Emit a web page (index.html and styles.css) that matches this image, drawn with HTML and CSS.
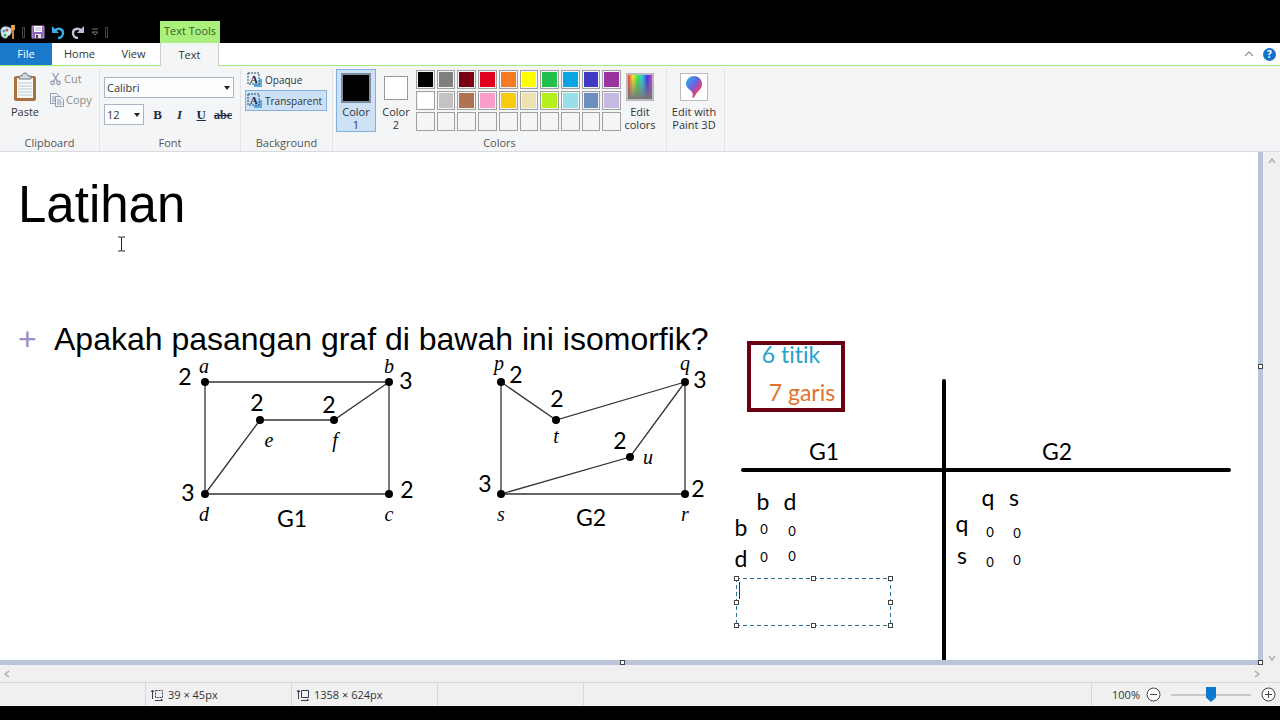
FILE: index.html
```html
<!DOCTYPE html>
<html lang="id">
<head>
    <meta charset="UTF-8">
    <meta name="viewport" content="width=device-width, initial-scale=1.0">
    <title>Paint</title>
    <link rel="stylesheet" href="styles.css">
</head>
<body>
    <header class="titlebar">
        <div class="quick">
            <svg width="16" height="16" viewBox="0 0 16 16">
                <path d="M1 8C0 4 4 2 7 3c4 0 5 3 4 6s-2 2-3 3 0 2-3 2-4-3-4-6z" fill="#d9eaf2" stroke="#8fb1c4"/>
                <circle cx="4" cy="7" r="1.500" fill="#3a9bd8"/><circle cx="7" cy="6" r="1.500" fill="#d84a3a"/><circle cx="5" cy="11" r="1.500" fill="#4cad4c"/>
                <path d="M13 6v9" stroke="#c98436" stroke-width="2"/><path d="M13 1v5" stroke="#e9a04c" stroke-width="4"/>
            </svg>
            <span class="bar"></span>
            <button class="tool" aria-label="Save">
                <svg width="14" height="14" viewBox="0 0 14 14">
                    <path d="M1 1h12v12H1z" fill="#8b62b4" stroke="#b598d2"/><path d="M3 1h8v6H3z" fill="#fff"/><path d="M4 3h6M4 5h6" stroke="#b9aac9"/><path d="M4 9h6v4H4z" fill="#ddd"/><path d="M5 10h2v3H5z" fill="#4d3569"/>
                </svg>
            </button>
            <button class="tool" aria-label="Undo">
                <svg width="14" height="14" viewBox="0 0 14 14"><path d="M1 1v7h7z" fill="#3fa9e0"/><path d="M3 6c4-4 9-2 9 2 0 3-2 5-5 5" fill="none" stroke="#3fa9e0" stroke-width="2.4"/></svg>
            </button>
            <button class="tool" aria-label="Redo">
                <svg width="14" height="14" viewBox="0 0 14 14"><path d="M13 1v7H6z" fill="#b8c1d3"/><path d="M11 6C7 2 2 4 2 8c0 3 2 5 5 5" fill="none" stroke="#b8c1d3" stroke-width="2.4"/></svg>
            </button>
            <button class="tool narrow" aria-label="Customize">
                <svg width="8" height="8" viewBox="0 0 8 8"><path d="M1 1h6M1 4h6L4 7z" fill="none" stroke="#777"/></svg>
            </button>
            <span class="bar"></span>
        </div>
        <div class="context">Text Tools</div>
    </header>

    <nav class="tabs">
        <button class="tab file">File</button>
        <button class="tab home">Home</button>
        <button class="tab view">View</button>
        <button class="tab active">Text</button>
        <div class="tabs-end">
            <button class="tool" aria-label="Collapse">
                <svg width="10" height="6" viewBox="0 0 10 6"><path d="M1 5l4-4 4 4" fill="none" stroke="#999" stroke-width="1.4"/></svg>
            </button>
            <button class="help">?</button>
        </div>
    </nav>

    <div class="ribbon">
        <section class="group clipboard">
            <div class="group-body">
                <button class="paste">
                    <svg width="26" height="30" viewBox="0 0 26 30">
                        <rect x="2" y="4" width="22" height="25" rx="2" fill="#a9723a"/><path d="M5 6h16v20H5z" fill="#f8fafc"/>
                        <path d="M6 11h14M6 14h14M6 17h14M6 20h14M6 23h14" stroke="#b9c6d4"/>
                        <path d="M7 7V4h3c0-4 6-4 6 0h3v3z" fill="#d5dade" stroke="#6d7680"/>
                    </svg>
                    Paste
                </button>
                <div class="stack muted">
                    <button class="mini">
                        <svg width="12" height="14" viewBox="0 0 14 14" fill="none" stroke="#8d9bb0" stroke-width="1.4"><path d="M3 0l6 10M10 0L4 10"/><circle cx="3" cy="11.500" r="2"/><circle cx="10" cy="11.500" r="2"/></svg>
                        Cut
                    </button>
                    <button class="mini">
                        <svg width="14" height="14" viewBox="0 0 14 14" fill="#f2f5fa" stroke="#8d9bb0"><path d="M.5.5h6l2 2v8h-8z"/><path d="M2 4h4M2 6h4M2 8h4"/><path d="M5.500 3.500h5l3 3v7h-8z"/><path d="M7 7h4M7 9h5M7 11h5"/></svg>
                        Copy
                    </button>
                </div>
            </div>
            <div class="group-name">Clipboard</div>
        </section>

        <section class="group font">
            <div class="group-body">
                <select class="family" aria-label="Font family"><option>Calibri</option></select>
                <div class="font-row">
                    <select class="size" aria-label="Font size"><option>12</option></select>
                    <button class="style"><b>B</b></button>
                    <button class="style"><b><i>I</i></b></button>
                    <button class="style"><b><u>U</u></b></button>
                    <button class="style small"><s>abc</s></button>
                </div>
            </div>
            <div class="group-name">Font</div>
        </section>

        <section class="group background">
            <div class="group-body">
                <button class="mode">
                    <svg width="16" height="16" viewBox="0 0 16 16"><path d="M7 7h8v8H7z" fill="#5aa9e6"/><path d="M1 1h11v11H1z" fill="#eaf3fb" stroke="#24476b" stroke-dasharray="2 1"/><text x="3" y="11" class="glyph">A</text></svg>
                    Opaque
                </button>
                <button class="mode on">
                    <svg width="16" height="16" viewBox="0 0 16 16"><path d="M7 7h8v8H7z" fill="#5aa9e6"/><path d="M1 1h11v11H1z" fill="#c5def5" stroke="#24476b" stroke-dasharray="2 1"/><text x="3" y="11" class="glyph">A</text></svg>
                    Transparent
                </button>
            </div>
            <div class="group-name">Background</div>
        </section>

        <section class="group colors">
            <div class="group-body">
                <button class="slot on"><span class="chip big c-black"></span>Color<br>1</button>
                <button class="slot"><span class="chip c-white"></span>Color<br>2</button>
                <div class="palette">
                    <button class="swatch c-black" aria-label="Black"></button>
                    <button class="swatch c-gray" aria-label="Gray"></button>
                    <button class="swatch c-darkred" aria-label="Dark red"></button>
                    <button class="swatch c-red" aria-label="Red"></button>
                    <button class="swatch c-orange" aria-label="Orange"></button>
                    <button class="swatch c-yellow" aria-label="Yellow"></button>
                    <button class="swatch c-green" aria-label="Green"></button>
                    <button class="swatch c-turquoise" aria-label="Turquoise"></button>
                    <button class="swatch c-indigo" aria-label="Indigo"></button>
                    <button class="swatch c-purple" aria-label="Purple"></button>
                    <button class="swatch c-white" aria-label="White"></button>
                    <button class="swatch c-silver" aria-label="Light gray"></button>
                    <button class="swatch c-brown" aria-label="Brown"></button>
                    <button class="swatch c-rose" aria-label="Rose"></button>
                    <button class="swatch c-gold" aria-label="Gold"></button>
                    <button class="swatch c-cream" aria-label="Light yellow"></button>
                    <button class="swatch c-lime" aria-label="Lime"></button>
                    <button class="swatch c-sky" aria-label="Light turquoise"></button>
                    <button class="swatch c-steel" aria-label="Blue gray"></button>
                    <button class="swatch c-lavender" aria-label="Lavender"></button>
                    <button class="swatch" aria-label="Empty"></button>
                    <button class="swatch" aria-label="Empty"></button>
                    <button class="swatch" aria-label="Empty"></button>
                    <button class="swatch" aria-label="Empty"></button>
                    <button class="swatch" aria-label="Empty"></button>
                    <button class="swatch" aria-label="Empty"></button>
                    <button class="swatch" aria-label="Empty"></button>
                    <button class="swatch" aria-label="Empty"></button>
                    <button class="swatch" aria-label="Empty"></button>
                    <button class="swatch" aria-label="Empty"></button>
                </div>
                <button class="slot edit"><span class="chip rainbow"></span>Edit<br>colors</button>
            </div>
            <div class="group-name">Colors</div>
        </section>

        <section class="group paint3d">
            <div class="group-body">
                <button class="slot edit">
                    <span class="chip drop">
                        <svg width="20" height="24" viewBox="0 0 20 24">
                            <defs><linearGradient id="drop" x1="0" y1="0" x2="1" y2="1"><stop offset="0" stop-color="#22c3ee"/><stop offset=".45" stop-color="#6a63dc"/><stop offset=".7" stop-color="#e0407e"/><stop offset="1" stop-color="#f5a623"/></linearGradient></defs>
                            <path d="M10 1c5 0 8 4 8 8 0 5-4 7-6 10-1 2-2 4-4 4 1-2 1-4 0-6-2-3-6-4-6-8s3-8 8-8z" fill="url(#drop)"/>
                        </svg>
                    </span>
                    Edit with<br>Paint 3D
                </button>
            </div>
        </section>
    </div>

    <main class="workspace">
        <div class="canvas">
            <h1>Latihan</h1>
            <p class="question"><span class="plus">+</span>Apakah pasangan graf di bawah ini isomorfik?</p>

            <!-- both graphs and the adjacency notes -->
            <svg class="drawing" width="1258" height="508" viewBox="0 152 1258 508">
                <g class="edges">
                    <path d="M205 382H389V494H205zM205 494L260 420H334L389 382"/>
                    <path d="M501 382V494H685V382L556 420zM501 494L630 457L685 382"/>
                </g>
                <g class="nodes">
                    <circle cx="205" cy="382" r="4"/><circle cx="389" cy="382" r="4"/><circle cx="389" cy="494" r="4"/>
                    <circle cx="205" cy="494" r="4"/><circle cx="260" cy="420" r="4"/><circle cx="334" cy="420" r="4"/>
                    <circle cx="501" cy="382" r="4"/><circle cx="685" cy="382" r="4"/><circle cx="685" cy="494" r="4"/>
                    <circle cx="501" cy="494" r="4"/><circle cx="556" cy="420" r="4"/><circle cx="630" cy="457" r="4"/>
                </g>
                <g class="names">
                    <text x="204" y="373">a</text><text x="389" y="373">b</text><text x="389" y="521">c</text>
                    <text x="204" y="521">d</text><text x="269" y="447">e</text><text x="335" y="447">f</text>
                    <text x="499" y="370">p</text><text x="685" y="370">q</text><text x="685" y="521">r</text>
                    <text x="501" y="521">s</text><text x="556" y="443">t</text><text x="648" y="464">u</text>
                </g>
                <g class="notes">
                    <text x="185" y="385">2</text><text x="406" y="389">3</text><text x="257" y="411">2</text>
                    <text x="329" y="413">2</text><text x="188" y="501">3</text><text x="407" y="498">2</text>
                    <text x="292" y="527">G1</text>
                    <text x="516" y="383">2</text><text x="700" y="388">3</text><text x="557" y="407">2</text>
                    <text x="620" y="449">2</text><text x="485" y="492">3</text><text x="698" y="497">2</text>
                    <text x="591" y="526">G2</text>
                    <text x="824" y="460">G1</text><text x="1057" y="460">G2</text>
                    <text x="763" y="510">b</text><text x="790" y="510">d</text>
                    <text x="741" y="536">b</text><text x="741" y="567">d</text>
                    <text x="988" y="506">q</text><text x="1014" y="506">s</text>
                    <text x="962" y="532">q</text><text x="962" y="564">s</text>
                    <text x="791" y="363" class="blue">6 titik</text><text x="802" y="401" class="amber">7 garis</text>
                </g>
                <g class="zeros">
                    <text x="764" y="534">0</text><text x="792" y="536">0</text><text x="764" y="562">0</text><text x="792" y="561">0</text>
                    <text x="990" y="537">0</text><text x="1017" y="538">0</text><text x="990" y="567">0</text><text x="1017" y="565">0</text>
                </g>
                <rect x="749" y="343" width="94" height="67" class="frame"/>
                <path d="M743 470H1229M944 381V664" class="thick"/>
                <path d="M118 237h3M122 237h3M118 251h3M122 251h3M121.500 237v14" class="cursor"/>
            </svg>

            <div class="textbox">
                <textarea aria-label="Text"></textarea>
                <span class="caret"></span>
                <i class="handle nw"></i><i class="handle n"></i><i class="handle ne"></i>
                <i class="handle w"></i><i class="handle e"></i>
                <i class="handle sw"></i><i class="handle s"></i><i class="handle se"></i>
            </div>
            <i class="handle canvas-e"></i><i class="handle canvas-s"></i><i class="handle canvas-se"></i>
        </div>
        <div class="vscroll">
            <svg width="8" height="6" viewBox="0 0 8 6"><path d="M1 5l3-4 3 4" class="arrow"/></svg>
            <svg width="8" height="6" viewBox="0 0 8 6"><path d="M1 1l3 4 3-4" class="arrow"/></svg>
        </div>
    </main>

    <div class="hscroll">
        <svg width="6" height="8" viewBox="0 0 6 8"><path d="M5 1L1 4l4 3" class="arrow"/></svg>
        <svg width="6" height="8" viewBox="0 0 6 8"><path d="M1 1l4 3-4 3" class="arrow"/></svg>
    </div>

    <footer class="status">
        <div class="cell"></div>
        <div class="cell">
            <svg width="13" height="12" viewBox="0 0 13 12" fill="none" stroke="#333f55"><path d="M1.500 2v8M0 3l1.500-2L3 3M4 11.500h7M10 10l2 1.500"/><path d="M4.500 1.500h7v7h-7z" stroke-dasharray="2 1"/></svg>
            39 × 45px
        </div>
        <div class="cell">
            <svg width="13" height="12" viewBox="0 0 13 12" fill="none" stroke="#333f55"><path d="M1.500 2v8M0 3l1.500-2L3 3M4 11.500h7M10 10l2 1.500M4.500 1.500h7v7h-7z"/></svg>
            1358 × 624px
        </div>
        <div class="cell"></div>
        <div class="zoom">
            <label for="zoom">100%</label>
            <button class="round" aria-label="Zoom out"><svg width="15" height="15" viewBox="0 0 15 15"><circle cx="7.500" cy="7.500" r="6.500"/><path d="M4 7.500h7"/></svg></button>
            <input type="range" id="zoom" min="0" max="100" value="50">
            <button class="round" aria-label="Zoom in"><svg width="15" height="15" viewBox="0 0 15 15"><circle cx="7.500" cy="7.500" r="6.500"/><path d="M4 7.500h7M7.500 4v7"/></svg></button>
        </div>
    </footer>
</body>
</html>
```

FILE: styles.css
```css
* {
    box-sizing: border-box;
}

body {
    margin: 0;
    padding: 21px 0 14px;
    height: 100vh;
    display: flex;
    flex-direction: column;
    overflow: hidden;
    background-color: #000;
    color: #333;
    font-family: "Open Sans", "Noto Sans", sans-serif;
    font-size: 11px;
    line-height: 12px;
}

button {
    padding: 0;
    border: none;
    background: none;
    color: inherit;
    font: inherit;
}

svg {
    display: block;
    flex: none;
}

/* title bar */
.titlebar {
    display: flex;
    height: 22px;
    flex: none;
}

.quick {
    display: flex;
    align-items: center;
    gap: 6px;
    width: 160px;
}

.bar {
    width: 3px;
    height: 11px;
    border: 1px solid #444;
}

.tool {
    display: flex;
}

.context {
    width: 60px;
    background-color: #a9f07c;
    color: #3b5a2c;
    line-height: 20px;
    text-align: center;
}

/* tabs */
.tabs {
    display: flex;
    flex: none;
    height: 23px;
    background-color: #fff;
    border-bottom: 1px solid #a3ee7a;
}

.tab {
    width: 53px;
}

.file {
    width: 52px;
    background-color: #1979ca;
    color: #fff;
}

.home {
    width: 55px;
}

.active {
    width: 59px;
    height: 23px;
    background-color: #f4f5f7;
    border: 1px solid #ccc;
    border-width: 0 1px;
}

.tabs-end {
    display: flex;
    align-items: center;
    gap: 9px;
    margin-left: auto;
    padding-right: 4px;
}

.help {
    width: 13px;
    height: 13px;
    border-radius: 50%;
    background-color: #1673c4;
    color: #fff;
    font-weight: bold;
    font-size: 10px;
}

/* ribbon */
.ribbon {
    display: flex;
    flex: none;
    height: 86px;
    padding-top: 3px;
    background-color: #f4f5f7;
    border-bottom: 1px solid #d8dadd;
}

.group {
    display: flex;
    flex-direction: column;
    border-right: 1px solid #e2e3e5;
}

.group-body {
    flex: 1;
}

.group-name {
    line-height: 16px;
    text-align: center;
    color: #555;
}

.clipboard {
    width: 100px;
}

.clipboard .group-body {
    display: flex;
    gap: 12px;
    padding: 3px 0 0 12px;
}

.paste {
    display: flex;
    flex-direction: column;
    align-items: center;
    gap: 4px;
    height: 46px;
    width: 26px;
}

.stack {
    display: flex;
    flex-direction: column;
    gap: 7px;
}

.mini {
    display: flex;
    align-items: center;
    gap: 2px;
}

.muted {
    color: #8c8c8c;
}

.font {
    width: 141px;
}

.font .group-body {
    padding: 8px 6px 0 4px;
}

select {
    appearance: none;
    display: block;
    height: 21px;
    padding: 0 2px;
    border: 1px solid #abb4c4;
    border-radius: 0;
    color: #333;
    font: inherit;
    background: #fcfdff url("data:image/svg+xml,%3Csvg xmlns='http://www.w3.org/2000/svg' viewBox='0 0 6 4'%3E%3Cpath d='M0 0h6L3 4z' fill='%23222'/%3E%3C/svg%3E") no-repeat right 3px center / 6px 4px;
}

.family {
    width: 130px;
}

.font-row {
    display: flex;
    align-items: center;
    margin-top: 6px;
}

.size {
    width: 40px;
    margin-right: 3px;
}

.style {
    width: 22px;
    color: #1d2b47;
    font-family: "Liberation Serif", serif;
    font-size: 13px;
}

.style.small {
    font-size: 12px;
    font-weight: bold;
}

.background {
    width: 92px;
}

.background .group-body {
    padding-left: 4px;
}

.mode {
    display: flex;
    align-items: center;
    gap: 2px;
    width: 82px;
    height: 21px;
    padding-left: 1px;
    border: 1px solid transparent;
    font-size: 10px;
}

.mode.on {
    background-color: #cce1f5;
    border-color: #84b1da;
}

.glyph {
    font: bold 11px "Liberation Serif", serif;
    fill: #1d2b47;
}

.colors {
    width: 334px;
}

.colors .group-body {
    display: flex;
    align-items: flex-start;
    padding-left: 3px;
}

.slot {
    width: 40px;
    height: 63px;
    padding-top: 2px;
    border: 1px solid transparent;
    line-height: 13px;
    text-align: center;
}

.slot.on {
    background-color: #cce1f5;
    border-color: #84b1da;
}

.chip {
    display: block;
    width: 24px;
    height: 24px;
    margin: 3px auto 5px;
    border: 1px solid #999;
}

.chip.big {
    width: 30px;
    height: 30px;
    margin: 0 auto 2px;
    border: 2px solid #7e8ea0;
}

.palette {
    display: grid;
    grid-template-columns: repeat(10, 1fr);
    grid-auto-rows: 19px;
    gap: 2px;
    width: 205px;
    padding-top: 1px;
}

.swatch {
    border: 1px solid #a0a0a0;
    padding: 1px;
    background-clip: content-box;
}

.slot.edit {
    width: 38px;
}

.edit .chip {
    width: 28px;
    height: 28px;
    margin: 0 auto 4px;
}

.edit .rainbow {
    border: 2px solid #bbb;
    background: linear-gradient(transparent, #777), linear-gradient(90deg, #f33, #fe3, #3e4, #3ce, #33e, #e3c);
}

.edit .drop {
    display: flex;
    align-items: center;
    justify-content: center;
    background-color: #fff;
    border-color: #bbb;
}

.paint3d {
    width: 58px;
}

.paint3d .slot {
    width: 54px;
}

.c-black { background-color: #000; }
.c-gray { background-color: #7f7f7f; }
.c-darkred { background-color: #7a0014; }
.c-red { background-color: #e2001f; }
.c-orange { background-color: #f47a24; }
.c-yellow { background-color: #ffff00; }
.c-green { background-color: #22c04a; }
.c-turquoise { background-color: #0aa6e2; }
.c-indigo { background-color: #3f39c4; }
.c-purple { background-color: #9a329f; }
.c-white { background-color: #fff; }
.c-silver { background-color: #c3c3c3; }
.c-brown { background-color: #b07352; }
.c-rose { background-color: #f99dca; }
.c-gold { background-color: #f9cb0e; }
.c-cream { background-color: #ebe2b0; }
.c-lime { background-color: #b5f01d; }
.c-sky { background-color: #99dfea; }
.c-steel { background-color: #6c8fbe; }
.c-lavender { background-color: #c5b8e2; }

/* drawing area */
.workspace {
    display: flex;
    flex: 1;
    min-height: 0;
    background-color: #b9c4d9;
}

.canvas {
    position: relative;
    flex: 1;
    margin: 0 5px 5px 0;
    background-color: #fff;
    color: #000;
    font-family: "Liberation Sans", Arial, sans-serif;
}

h1 {
    margin: 0;
    padding: 22px 0 0 18px;
    font-size: 51px;
    font-weight: normal;
    line-height: 62px;
}

.question {
    display: flex;
    align-items: center;
    margin: 83px 0 0;
    padding-left: 18px;
    font-size: 32px;
    line-height: 40px;
    white-space: nowrap;
}

.plus {
    width: 36px;
    color: #9a8fc8;
}

.drawing {
    position: absolute;
    left: 0;
    top: 0;
}

.edges {
    fill: none;
    stroke: #333;
    stroke-width: 1.3;
}

.names {
    font: italic 20px "Liberation Serif", serif;
    text-anchor: middle;
}

.notes {
    font: 23px Lato, sans-serif;
    font-variant-ligatures: none;
    text-anchor: middle;
}

.zeros {
    font: 13px Lato, sans-serif;
    text-anchor: middle;
}

.blue {
    fill: #2a9fcb;
}

.amber {
    fill: #dd7430;
}

.frame {
    fill: none;
    stroke: #6a0012;
    stroke-width: 4;
}

.thick {
    stroke: #000;
    stroke-width: 4;
    stroke-linecap: round;
}

.cursor {
    stroke: #222;
}

.textbox {
    position: absolute;
    left: 736px;
    top: 426px;
    width: 155px;
    height: 48px;
}

textarea {
    display: block;
    width: 100%;
    height: 100%;
    padding: 2px;
    border: none;
    resize: none;
    background:
        repeating-linear-gradient(90deg, #2f7096 0 4px, transparent 4px 7px) top / 100% 1px no-repeat,
        repeating-linear-gradient(90deg, #2f7096 0 4px, transparent 4px 7px) bottom / 100% 1px no-repeat,
        repeating-linear-gradient(#2f7096 0 4px, transparent 4px 7px) left / 1px 100% no-repeat,
        repeating-linear-gradient(#2f7096 0 4px, transparent 4px 7px) right / 1px 100% no-repeat;
}

.caret {
    position: absolute;
    left: 3px;
    top: 4px;
    width: 1px;
    height: 17px;
    background-color: #333;
}

.handle {
    position: absolute;
    width: 5px;
    height: 5px;
    border: 1px solid #444;
    background-color: #fff;
}

.nw, .w, .sw { left: -2px; }
.n, .s { left: 75px; }
.ne, .e, .se { right: -2px; }
.nw, .n, .ne { top: -2px; }
.w, .e { top: 22px; }
.sw, .s, .se { bottom: -2px; }

.canvas-e { right: -5px; top: 212px; }
.canvas-s { bottom: -5px; left: 620px; }
.canvas-se { right: -5px; bottom: -5px; }

/* scroll bars */
.vscroll {
    display: flex;
    flex-direction: column;
    justify-content: space-between;
    align-items: center;
    width: 17px;
    padding: 6px 0 4px;
    background-color: #f0f0f0;
}

.hscroll {
    display: flex;
    flex: none;
    align-items: center;
    justify-content: space-between;
    height: 18px;
    padding: 0 20px 0 4px;
    background-color: #f0f0f0;
    border-bottom: 1px solid #d9d9d9;
}

.arrow {
    fill: none;
    stroke: #aaa;
    stroke-width: 1.4;
}

/* status bar */
.status {
    display: flex;
    flex: none;
    height: 23px;
    background-color: #f0f0f0;
}

.cell {
    display: flex;
    align-items: center;
    gap: 4px;
    width: 146px;
    padding-left: 5px;
    border-right: 1px solid #d6d6d6;
}

.zoom {
    display: flex;
    align-items: center;
    gap: 6px;
    margin-left: auto;
    padding-left: 20px;
    padding-right: 4px;
    border-left: 1px solid #d6d6d6;
}

.round {
    fill: #fff;
    stroke: #444;
}

.zoom input {
    appearance: none;
    width: 80px;
    height: 16px;
    margin: 0 4px;
    background: linear-gradient(#c8c8c8, #c8c8c8) center / 100% 2px no-repeat;
}

.zoom input::-webkit-slider-thumb {
    appearance: none;
    width: 10px;
    height: 15px;
    background-color: #0f78d0;
    clip-path: polygon(0 0, 100% 0, 100% 70%, 50% 100%, 0 70%);
}
```
